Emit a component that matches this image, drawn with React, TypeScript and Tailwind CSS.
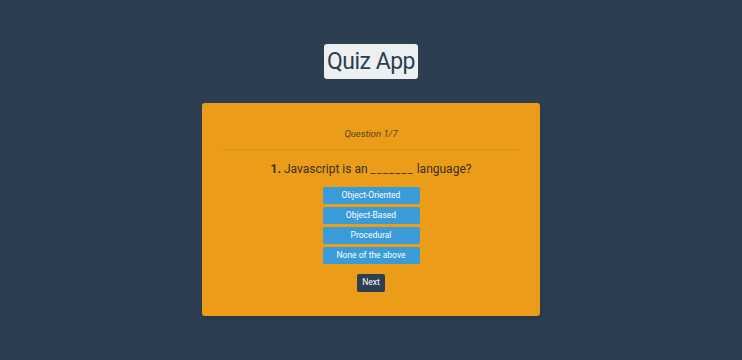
import React, { useState } from 'react';

const options = ['Object-Oriented', 'Object-Based', 'Procedural', 'None of the above'];

export default function App() {
  const [selected, setSelected] = useState<number | null>(null);

  return (
    <div
      className="min-h-screen bg-[#2c3e50] flex flex-col items-center pt-[44px]"
      style={{ fontFamily: 'Roboto, "Noto Sans", sans-serif' }}
    >
      <h1 className="bg-[#ecf0f1] text-[#2c3e50] rounded-[3px] px-[3px] h-[35px] leading-[35px] text-[23px] tracking-[-0.5px]">
        Quiz App
      </h1>

      <div className="mt-[24px] w-[338px] h-[213px] bg-[#eb9d1a] rounded-[3px] shadow-md flex flex-col items-center pt-[24px]">
        <p className="italic text-[9.5px] text-[#5a4120]">Question 1/7</p>
        <hr className="w-[296px] mt-[8px] border-t border-[#dc9015]" />
        <p className="mt-[10px] text-[12px] text-[#3a2f23]">
          <span className="font-bold">1.</span> Javascript is an{' '}
          <span className="text-[11px] tracking-[1.2px]">_______</span> language?
        </p>

        <div className="mt-[8px] flex flex-col gap-[3px]">
          {options.map((o, i) => (
            <button
              key={o}
              onClick={() => setSelected(i)}
              className={`w-[97px] h-[17px] rounded-[2px] text-[8.5px] text-white ${
                selected === i ? 'bg-[#2980b9]' : 'bg-[#3a9bd9]'
              }`}
            >
              {o}
            </button>
          ))}
        </div>

        <button className="mt-[10px] w-[28px] h-[18px] rounded-[2px] bg-[#2c3e50] text-white text-[8.5px]">
          Next
        </button>
      </div>
    </div>
  );
}
